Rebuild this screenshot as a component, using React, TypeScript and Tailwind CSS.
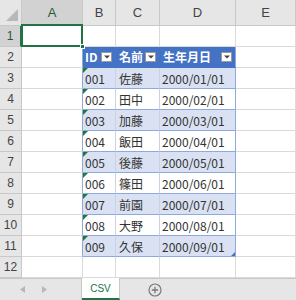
import { Fragment } from 'react'

const COLS = ['A', 'B', 'C', 'D', 'E']

const rows = [
  { id: '001', name: '佐藤', date: '2000/01/01' },
  { id: '002', name: '田中', date: '2000/02/01' },
  { id: '003', name: '加藤', date: '2000/03/01' },
  { id: '004', name: '飯田', date: '2000/04/01' },
  { id: '005', name: '後藤', date: '2000/05/01' },
  { id: '006', name: '篠田', date: '2000/06/01' },
  { id: '007', name: '前園', date: '2000/07/01' },
  { id: '008', name: '大野', date: '2000/08/01' },
  { id: '009', name: '久保', date: '2000/09/01' },
]

const font = { fontFamily: '"Noto Sans CJK JP", "Noto Sans", sans-serif' }

function Dropdown() {
  return (
    <span className="ml-auto mr-[3px] flex h-[10px] w-[11px] shrink-0 items-center justify-center border border-[#9a9a9a] bg-white">
      <svg width="6" height="4" viewBox="0 0 6 4">
        <path d="M0 0.5h6L3 3.5z" fill="#444" />
      </svg>
    </span>
  )
}

function TextFlag() {
  return (
    <svg className="absolute left-0 top-0" width="5" height="5" viewBox="0 0 5 5">
      <path d="M0 0h5L0 5z" fill="#1e7b34" />
    </svg>
  )
}

export default function App() {
  const grid = 'border-r border-b border-[#dadada]'
  const head = 'border-r border-b border-[#c8c8c8] bg-[#e6e6e6] text-[#444]'

  return (
    <div className="flex h-[300px] w-[296px] flex-col overflow-hidden bg-white" style={font}>
      <div className="grid grid-cols-[22px_61px_33px_44px_76px_60px] grid-rows-[26px_repeat(12,21px)] text-[12px] text-[#333]">
        {/* corner */}
        <div className={`${head} relative`}>
          <svg className="absolute right-[3px] bottom-[4px]" width="12" height="12" viewBox="0 0 12 12">
            <path d="M12 0v12H0z" fill="#b8b8b8" />
          </svg>
        </div>
        {COLS.map((c) => (
          <div
            key={c}
            className={
              c === 'A'
                ? 'flex items-center justify-center border-r border-b-2 border-r-[#c8c8c8] border-b-[#217346] bg-[#d2d2d2] pt-[2px] text-[13px] text-[#1f5c3a]'
                : `${head} flex items-center justify-center pt-[1px] text-[13px]`
            }
            style={{ fontFamily: '"Liberation Sans", Arial, sans-serif' }}
          >
            {c}
          </div>
        ))}

        {Array.from({ length: 12 }, (_, i) => {
          const r = i + 1
          const data = r >= 3 && r <= 11 ? rows[r - 3] : null
          const band = r % 2 === 1 ? 'bg-[#d9e1f2]' : 'bg-white'
          const inTable = r >= 2 && r <= 11
          return (
            <Fragment key={r}>
              <div
                className={
                  r === 1
                    ? 'flex items-center justify-center border-b border-r-2 border-b-[#c8c8c8] border-r-[#217346] bg-[#d2d2d2] text-[12px] text-[#1f5c3a]'
                    : `${head} flex items-center justify-center text-[12px]`
                }
                style={{ fontFamily: '"Liberation Sans", Arial, sans-serif' }}
              >
                {r}
              </div>
              {/* A */}
              <div className={`relative border-b border-[#dadada] border-r ${inTable ? 'border-r-[#8ea9db]' : ''}`}>
                {r === 1 && (
                  <div className="absolute -left-px -top-[2px] -right-px -bottom-px z-10 border-2 border-[#217346]">
                    <div className="absolute -right-[4px] -bottom-[4px] h-[5px] w-[5px] border border-white bg-[#217346]" />
                  </div>
                )}
              </div>
              {r === 2 ? (
                <>
                  <div className="flex items-center border-r border-b border-[#4472c4] bg-[#4472c4] pl-[2px] font-bold text-white">
                    ID
                    <Dropdown />
                  </div>
                  <div className="flex items-center border-r border-b border-[#4472c4] bg-[#4472c4] pl-[3px] font-bold text-white">
                    名前
                    <Dropdown />
                  </div>
                  <div className="flex items-center border-r border-b border-r-[#8ea9db] border-b-[#4472c4] bg-[#4472c4] pl-[3px] font-bold text-white">
                    生年月日
                    <Dropdown />
                  </div>
                </>
              ) : data ? (
                <>
                  <div className={`relative flex items-center border-r border-b border-r-[#c9d3e8] border-b-[#8ea9db] ${band} pl-[2px] pt-[1px]`}>
                    <TextFlag />
                    {data.id}
                  </div>
                  <div className={`flex items-center border-r border-b border-r-[#c9d3e8] border-b-[#8ea9db] ${band} pl-[3px] pt-[1px]`}>
                    {data.name}
                  </div>
                  <div className={`relative flex items-center border-r border-b border-[#8ea9db] ${band} pl-[2px] pt-[1px]`}>
                    {data.date}
                    {r === 11 && (
                      <svg className="absolute right-0 bottom-0" width="4" height="4" viewBox="0 0 4 4">
                        <path d="M4 0v4H0z" fill="#4472c4" />
                      </svg>
                    )}
                  </div>
                </>
              ) : (
                <>
                  <div className={grid} />
                  <div className={grid} />
                  <div className={grid} />
                </>
              )}
              <div className={grid} />
            </Fragment>
          )
        })}
      </div>

      {/* sheet tabs */}
      <div className="flex h-[22px] items-stretch border-t border-[#c8c8c8] bg-[#e6e6e6]">
        <div className="flex w-[82px] items-center border-r border-[#c8c8c8] pl-[20px] gap-[17px] text-[#b8b8b8]">
          <svg width="5" height="7" viewBox="0 0 5 7">
            <path d="M5 0v7L0 3.5z" fill="currentColor" />
          </svg>
          <svg width="5" height="7" viewBox="0 0 5 7">
            <path d="M0 0v7l5-3.5z" fill="currentColor" />
          </svg>
        </div>
        <div
          className="-mt-px flex w-[38px] items-center justify-center border-r border-b-2 border-r-[#c8c8c8] border-b-[#217346] bg-white pt-[1px] text-[10px] text-[#217346]"
          style={{ fontFamily: '"Liberation Sans", Arial, sans-serif' }}
        >
          CSV
        </div>
        <div className="flex items-center pl-[28px]">
          <svg width="14" height="14" viewBox="0 0 14 14">
            <circle cx="7" cy="7" r="6" fill="none" stroke="#7a7a7a" strokeWidth="1.2" />
            <path d="M7 3.8v6.4M3.8 7h6.4" stroke="#7a7a7a" strokeWidth="1.3" />
          </svg>
        </div>
      </div>
    </div>
  )
}
